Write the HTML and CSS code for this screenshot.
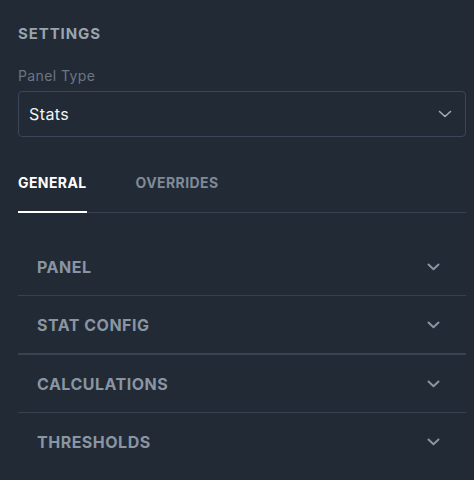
FILE: index.html
```html
<!DOCTYPE html>
<html>
<head>
<meta charset="utf-8">
<link rel="stylesheet" href="styles.css">
</head>
<body>
<div class="panel">
  <h2 class="title">SETTINGS</h2>
  <div class="field">
    <label class="field-label">Panel Type</label>
    <div class="select">
      <span class="select-value">Stats</span>
      <svg class="select-chevron" width="14" height="8" viewBox="0 0 14 8"><path d="M1.5 1.5 L7 6.5 L12.5 1.5" fill="none" stroke="currentColor" stroke-width="1.6" stroke-linecap="round" stroke-linejoin="round"/></svg>
    </div>
  </div>
  <div class="tabs">
    <div class="tab active">GENERAL</div>
    <div class="tab">OVERRIDES</div>
  </div>
  <div class="accordion">
    <div class="acc-item"><span class="acc-label">PANEL</span><svg class="acc-chevron" width="13" height="8" viewBox="0 0 13 8"><path d="M1.5 1.5 L6.5 6.3 L11.5 1.5" fill="none" stroke="currentColor" stroke-width="2" stroke-linecap="round" stroke-linejoin="round"/></svg></div>
    <div class="acc-item thick"><span class="acc-label">STAT CONFIG</span><svg class="acc-chevron" width="13" height="8" viewBox="0 0 13 8"><path d="M1.5 1.5 L6.5 6.3 L11.5 1.5" fill="none" stroke="currentColor" stroke-width="2" stroke-linecap="round" stroke-linejoin="round"/></svg></div>
    <div class="acc-item"><span class="acc-label">CALCULATIONS</span><svg class="acc-chevron" width="13" height="8" viewBox="0 0 13 8"><path d="M1.5 1.5 L6.5 6.3 L11.5 1.5" fill="none" stroke="currentColor" stroke-width="2" stroke-linecap="round" stroke-linejoin="round"/></svg></div>
    <div class="acc-item last"><span class="acc-label">THRESHOLDS</span><svg class="acc-chevron" width="13" height="8" viewBox="0 0 13 8"><path d="M1.5 1.5 L6.5 6.3 L11.5 1.5" fill="none" stroke="currentColor" stroke-width="2" stroke-linecap="round" stroke-linejoin="round"/></svg></div>
  </div>
</div>
</body>
</html>
```
FILE: styles.css
```css
html, body {
  margin: 0;
  padding: 0;
  background: #222a35;
  font-family: Inter, "Noto Sans", sans-serif;
}
.panel {
  padding: 25px 8px 0 18px;
  display: flex;
  flex-direction: column;
}
.title {
  margin: 0;
  font-size: 15px;
  line-height: 18px;
  font-weight: 700;
  color: #9aa4af;
  letter-spacing: 0.9px;
}
.field {
  margin-top: 24px;
  display: flex;
  flex-direction: column;
  gap: 7px;
}
.field-label {
  font-size: 14px;
  line-height: 17px;
  color: #6b7684;
  letter-spacing: 0.4px;
}
.select {
  box-sizing: border-box;
  height: 46px;
  border: 1px solid #3d4658;
  border-radius: 4px;
  display: flex;
  align-items: center;
  justify-content: space-between;
  padding: 0 13px 0 10px;
}
.select-value {
  font-size: 16px;
  color: #f2f4f6;
  letter-spacing: 0.4px;
}
.select-chevron {
  color: #a3adb8;
}
.tabs {
  margin-top: 37px;
  display: flex;
  gap: 49px;
  border-bottom: 1px solid #38414d;
}
.tab {
  font-size: 14px;
  line-height: 17px;
  font-weight: 700;
  color: #7f8b98;
  letter-spacing: 0.4px;
  padding-bottom: 20px;
  margin-bottom: -1px;
  border-bottom: 2px solid transparent;
}
.tab.active {
  color: #ffffff;
  border-bottom-color: #ffffff;
}
.accordion {
  margin-top: 25px;
  display: flex;
  flex-direction: column;
}
.acc-item {
  height: 57px;
  display: flex;
  align-items: center;
  justify-content: space-between;
  padding: 0 26px 0 19px;
  border-bottom: 1px solid #38414d;
}
.acc-item.thick {
  border-bottom: 2px solid #3a434f;
}
.acc-item.last {
  border-bottom: none;
}
.acc-label {
  font-size: 16px;
  font-weight: 700;
  color: #8995a2;
  letter-spacing: 0.5px;
}
.acc-chevron {
  color: #8995a2;
}
```
